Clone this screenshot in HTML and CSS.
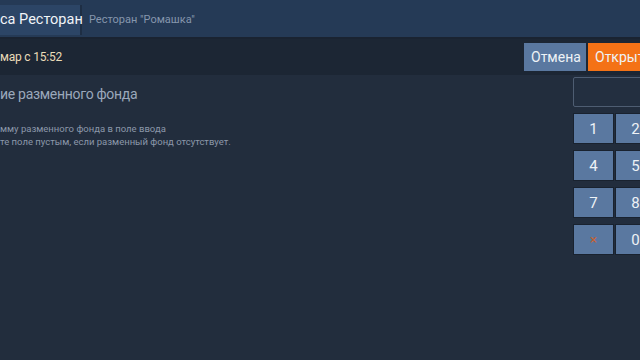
FILE: index.html
```html
<!DOCTYPE html>
<html lang="ru">
<head>
    <meta charset="UTF-8" />
    <meta name="viewport" content="width=device-width, initial-scale=1.0" />
    <title>Разменный фонд</title>
    <link rel="stylesheet" href="styles.css">
</head>
<body>
    <div class="header">
        <div class="header-title">са Ресторан</div>
        <div class="header-sub">Ресторан "Ромашка"</div>
    </div>

    <div class="toolbar">
        <div class="shift-info">мар с 15:52</div>
        <div class="toolbar-buttons">
            <button class="btn btn-cancel">Отмена</button>
            <button class="btn btn-open">Открыт</button>
        </div>
    </div>

    <div class="main">
        <div class="content">
            <h1>ие разменного фонда</h1>
            <p class="hint">мму разменного фонда в поле ввода<br>те поле пустым, если разменный фонд отсутствует.</p>
        </div>

        <div class="keypad">
            <div class="keypad-input"></div>
            <div class="keys">
                <button class="key">1</button>
                <button class="key">2</button>
                <button class="key">4</button>
                <button class="key">5</button>
                <button class="key">7</button>
                <button class="key">8</button>
                <button class="key key-clear">×</button>
                <button class="key">0</button>
            </div>
        </div>
    </div>
</body>
</html>
```

FILE: styles.css
```css
* {
    box-sizing: border-box;
}

body {
    font-family: Roboto, 'Noto Sans', sans-serif;
    margin: 0;
    width: 640px;
    height: 360px;
    overflow: hidden;
    background-color: #222d3d;
    display: flex;
    flex-direction: column;
}

.header {
    height: 39px;
    background-color: #253a56;
    border-bottom: 2px solid #1a2331;
    display: flex;
    align-items: flex-start;
    padding-top: 5px;
}

.header-title {
    height: 30px;
    width: 82px;
    background-color: #2c4566;
    color: #f0f4f8;
    font-size: 14.5px;
    line-height: 30px;
    white-space: nowrap;
    border-right: 2px solid #1e2e44;
}

.header-sub {
    margin-left: 7px;
    color: #8596ad;
    font-size: 11px;
    line-height: 30px;
}

.toolbar {
    height: 36px;
    background-color: #1c2634;
    display: flex;
    align-items: center;
    justify-content: space-between;
}

.shift-info {
    color: #eadcb8;
    font-size: 12px;
    letter-spacing: -0.2px;
}

.toolbar-buttons {
    display: flex;
    gap: 2px;
    width: 116px;
    overflow: hidden;
    align-self: flex-start;
    margin-top: 4px;
}

.btn {
    height: 28px;
    border: none;
    padding: 0 7px;
    font-family: inherit;
    font-size: 14px;
    color: #eef2f6;
    flex-shrink: 0;
}

.btn-cancel {
    background-color: #5a78a0;
    width: 62px;
}

.btn-open {
    background-color: #f47216;
    text-align: left;
    width: 60px;
}

.main {
    flex: 1;
    display: flex;
    justify-content: space-between;
}

.content {
    padding-top: 8px;
}

h1 {
    margin: 0;
    font-size: 14px;
    letter-spacing: -0.3px;
    font-weight: normal;
    color: #9ba8bb;
    line-height: 22px;
}

.hint {
    margin: 17px 0 0;
    font-size: 9.5px;
    line-height: 13px;
    color: #8c98aa;
}

.keypad {
    width: 67px;
    padding-top: 2px;
    overflow: hidden;
}

.keypad-input {
    width: 80px;
    height: 30px;
    border: 1px solid #4e5d72;
    border-radius: 2px;
    background-color: #232f40;
}

.keys {
    margin-top: 6px;
    display: grid;
    grid-template-columns: 41px 41px;
    gap: 6px 1px;
    width: 90px;
}

.key {
    height: 31px;
    border: 1px solid #19222f;
    background-color: #5a78a0;
    color: #eef2f6;
    font-family: inherit;
    font-size: 15px;
    padding: 0;
}

.key-clear {
    color: #c9602e;
    font-size: 13px;
}
```
